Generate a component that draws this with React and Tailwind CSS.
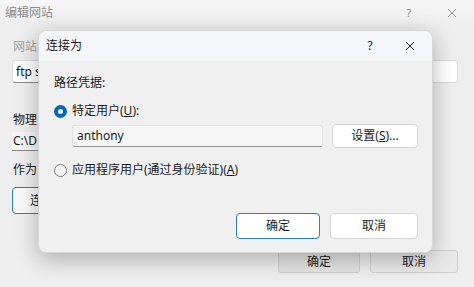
import React from "react";

const font = { fontFamily: '"Noto Sans", "Noto Sans CJK SC", sans-serif' };

const Radio = ({ checked }) =>
  checked ? (
    <span className="w-[13px] h-[13px] rounded-full bg-[#0067c0] flex items-center justify-center shrink-0">
      <span className="w-[5px] h-[5px] rounded-full bg-white" />
    </span>
  ) : (
    <span className="w-[13px] h-[13px] rounded-full border border-[#7a7a7a] bg-[#f7f7f7] shrink-0" />
  );

const CloseIcon = ({ className }) => (
  <svg viewBox="0 0 10 10" className={className} fill="none" stroke="currentColor" strokeWidth="1">
    <path d="M1 1 L9 9 M9 1 L1 9" />
  </svg>
);

export default function App() {
  return (
    <div className="relative w-[474px] h-[287px] overflow-hidden bg-[#eeeeee] text-[#1b1b1b]" style={font}>
      {/* background window: 编辑网站 */}
      <div className="flex flex-col h-full">
        <div className="h-[26px] flex items-center pl-[5px] bg-gradient-to-b from-[#f6f6f6] to-[#eeeeee] text-[12px] text-[#8c8c8c]">
          <span>编辑网站</span>
          <span className="ml-auto w-[10px] text-center text-[11px]">?</span>
          <CloseIcon className="w-[10px] h-[10px] ml-[33px] mr-[17px] text-[#9a9a9a]" />
        </div>
        <div className="flex-1 pl-[12px] pr-[16px] text-[12px]">
          <div className="pl-[1px] mt-[13px] leading-[16px] text-[#a0a0a0]">网站</div>
          <div className="flex mt-[5px] gap-[10px]">
            <div className="flex-1 h-[23px] bg-white border border-[#dcdcdc] border-b-[#8a8a8a] rounded-[3px] px-[3px] leading-[21px]">ftp s</div>
            <div className="w-[28px] h-[23px] bg-white border border-[#dcdcdc] rounded-[3px]" />
          </div>
          <div className="pl-[1px] mt-[29px] leading-[16px]">物理</div>
          <div className="mt-[4px] w-[300px] h-[19px] bg-[#f6f6f6] border-b border-[#8a8a8a] px-[1px] leading-[18px]">C:\D</div>
          <div className="pl-[1px] mt-[11px] leading-[16px]">作为</div>
          <div className="mt-[9px] w-[90px] h-[27px] rounded-[4px] border border-[#2f7cc8] bg-[#f9f9f9] flex items-center pl-[17px]">连</div>
          <div className="flex justify-end gap-[10px] mt-[36px]">
            <div className="w-[82px] h-[23px] rounded-[3px] border border-[#d0d0d0] bg-[#e4e4e4] flex items-center justify-center">确定</div>
            <div className="w-[88px] h-[23px] rounded-[3px] border border-[#d0d0d0] bg-[#e9e9e9] flex items-center justify-center">取消</div>
          </div>
        </div>
      </div>

      {/* dialog: 连接为 */}
      <div className="absolute left-[38px] top-[30px] w-[395px] h-[223px] rounded-[8px] overflow-hidden bg-[#f0f0f0] border border-[#d8d8d8] shadow-[0_6px_22px_rgba(0,0,0,0.28)] flex flex-col">
        <div className="h-[30px] flex items-center pl-[7px] bg-[#f4f6f9] text-[12px]">
          <span>连接为</span>
          <span className="ml-auto w-[10px] text-center text-[12px]">?</span>
          <CloseIcon className="w-[10px] h-[10px] ml-[30px] mr-[17px] text-[#222]" />
        </div>
        <div className="flex-1 flex flex-col pl-[15px] pr-[14px] text-[12px]">
          <div className="mt-[14px] leading-[16px]">路径凭据:</div>
          <div className="mt-[12px] flex items-center gap-[5px] leading-[16px]">
            <Radio checked />
            <span>特定用户(<span className="underline">U</span>):</span>
          </div>
          <div className="mt-[5px] flex items-center gap-[9px] pl-[18px]">
            <div className="flex-1 h-[22px] bg-[#f6f6f6] border border-[#e2e2e2] border-b-[#9a9a9a] rounded-[3px] px-[4px] leading-[20px]">anthony</div>
            <div className="w-[86px] h-[24px] rounded-[4px] border border-[#d5d5d5] bg-white flex items-center justify-center">
              设置(<span className="underline">S</span>)...
            </div>
          </div>
          <div className="mt-[14px] flex items-center gap-[5px] leading-[16px]">
            <Radio />
            <span>应用程序用户(通过身份验证)(<span className="underline">A</span>)</span>
          </div>
          <div className="mt-[35px] flex justify-end gap-[10px]">
            <div className="w-[84px] h-[26px] rounded-[4px] border border-[#2f7cc8] bg-white flex items-center justify-center">确定</div>
            <div className="w-[88px] h-[26px] rounded-[4px] border border-[#d5d5d5] bg-white flex items-center justify-center">取消</div>
          </div>
        </div>
      </div>
    </div>
  );
}
